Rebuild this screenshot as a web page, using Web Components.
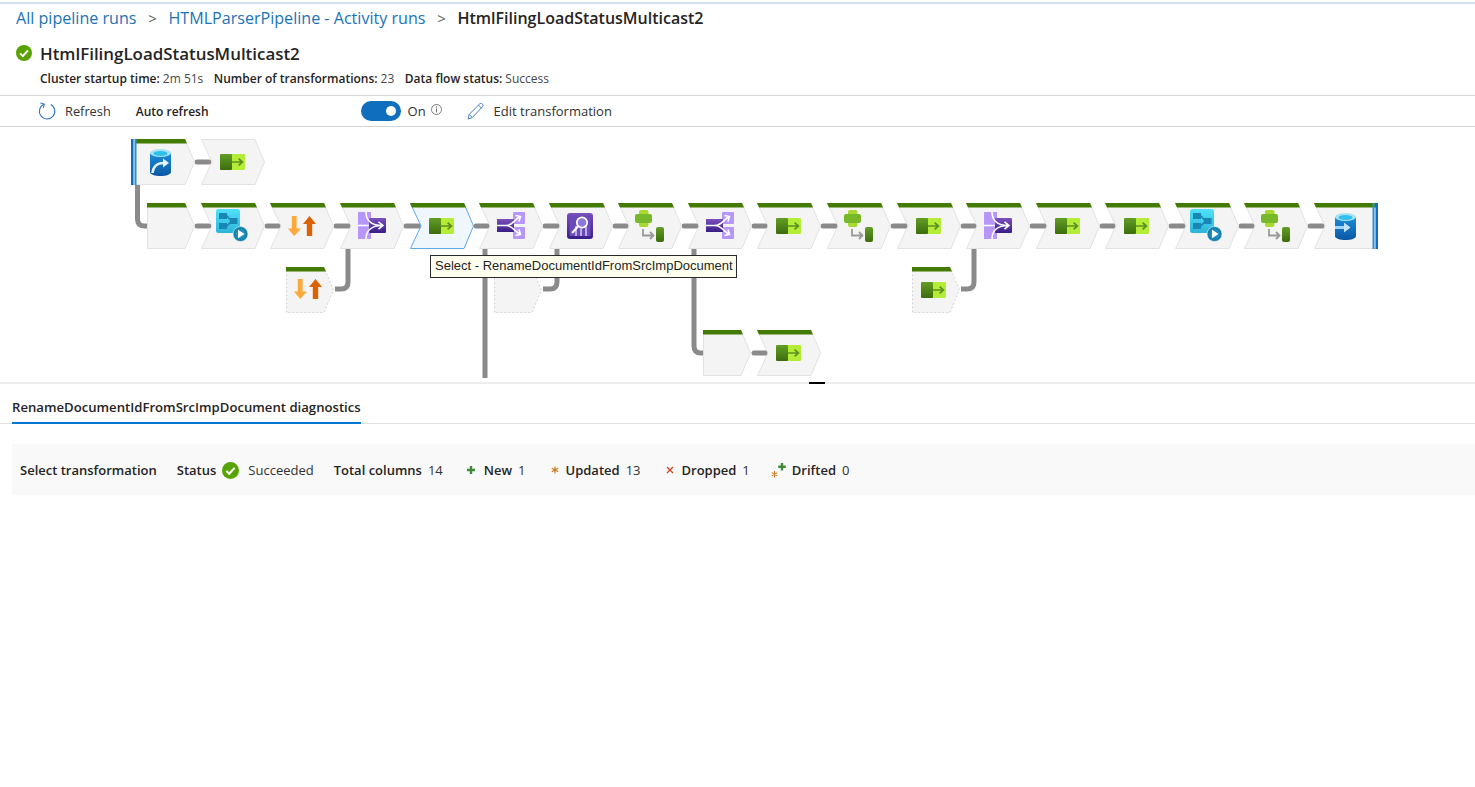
<!DOCTYPE html>
<html lang="en">
<head>
<meta charset="utf-8">
<title>HtmlFilingLoadStatusMulticast2</title>
<style>
  html, body { margin: 0; height: 100%; background: #fff; overflow: hidden; }
  body { font-family: "Open Sans", "Noto Sans", sans-serif; color: #252423; }
</style>
</head>
<body>
  <run-breadcrumb>
    <a slot="first">All pipeline runs</a>
    <a slot="second">HTMLParserPipeline - Activity runs</a>
    <span slot="current">HtmlFilingLoadStatusMulticast2</span>
  </run-breadcrumb>
  <run-header name="HtmlFilingLoadStatusMulticast2">
    <run-stat label="Cluster startup time:" value="2m 51s"></run-stat>
    <run-stat label="Number of transformations:" value="23"></run-stat>
    <run-stat label="Data flow status:" value="Success"></run-stat>
  </run-header>
  <run-toolbar></run-toolbar>
  <flow-canvas>
    <flow-node x="131" y="12" shape="start" icon="source"></flow-node>
    <flow-node x="201" y="12" icon="select" nobar></flow-node>

    <flow-node x="147" y="76" shape="flat"></flow-node>
    <flow-node x="201" y="76" icon="flow"></flow-node>
    <flow-node x="270" y="76" icon="sort"></flow-node>
    <flow-node x="340" y="76" icon="join"></flow-node>
    <flow-node x="410" y="76" icon="select" selected></flow-node>
    <flow-node x="479" y="76" icon="split"></flow-node>
    <flow-node x="549" y="76" icon="window"></flow-node>
    <flow-node x="618" y="76" icon="derive"></flow-node>
    <flow-node x="688" y="76" icon="split"></flow-node>
    <flow-node x="757" y="76" icon="select"></flow-node>
    <flow-node x="827" y="76" icon="derive"></flow-node>
    <flow-node x="897" y="76" icon="select"></flow-node>
    <flow-node x="966" y="76" icon="join"></flow-node>
    <flow-node x="1036" y="76" icon="select"></flow-node>
    <flow-node x="1105" y="76" icon="select"></flow-node>
    <flow-node x="1175" y="76" icon="flow"></flow-node>
    <flow-node x="1244" y="76" icon="derive"></flow-node>
    <flow-node x="1314" y="76" shape="end" icon="sink"></flow-node>

    <flow-node x="286" y="140" shape="flat" icon="sort" dashed></flow-node>
    <flow-node x="494" y="140" shape="flat" dashed></flow-node>
    <flow-node x="912" y="140" shape="flat" icon="select" dashed></flow-node>

    <flow-node x="703" y="203" shape="flat"></flow-node>
    <flow-node x="757" y="203" icon="select"></flow-node>

    <flow-tooltip x="430" y="128">Select - RenameDocumentIdFromSrcImpDocument</flow-tooltip>
  </flow-canvas>
  <diag-tabs>RenameDocumentIdFromSrcImpDocument diagnostics</diag-tabs>
  <diag-summary>
    <diag-item label="Select transformation"></diag-item>
    <diag-item label="Status" icon="check" value="Succeeded"></diag-item>
    <diag-item label="Total columns" value="14"></diag-item>
    <diag-item label="New" icon="plus" value="1"></diag-item>
    <diag-item label="Updated" icon="star" value="13"></diag-item>
    <diag-item label="Dropped" icon="cross" value="1"></diag-item>
    <diag-item label="Drifted" icon="drift" value="0"></diag-item>
  </diag-summary>

<script>
  const CHECK_ICON = (size) => `
    <svg width="${size}" height="${size}" viewBox="0 0 16 16" aria-hidden="true">
      <circle cx="8" cy="8" r="8" fill="#57a300"/>
      <path d="M4.1 8.4l2.7 2.7 5.1-5.6" fill="none" stroke="#fff" stroke-width="2"/>
    </svg>`;

  const GREEN_GRAD = `
    <linearGradient id="gr" x1="0" y1="0" x2="0" y2="1">
      <stop offset="0" stop-color="#639e26"/><stop offset="1" stop-color="#3c6c0c"/>
    </linearGradient>`;
  const PURPLE_GRAD = `
    <linearGradient id="pu" x1="0" y1="0" x2="0" y2="1">
      <stop offset="0" stop-color="#7c50bd"/><stop offset="1" stop-color="#3a1d86"/>
    </linearGradient>`;
  const BLUE_GRAD = `
    <linearGradient id="bl" x1="0" y1="0" x2="0" y2="1">
      <stop offset="0" stop-color="#1b8ed8"/><stop offset="1" stop-color="#0b57a4"/>
    </linearGradient>`;
  const CYAN_GRAD = `
    <linearGradient id="cy" x1="0" y1="0" x2="0" y2="1">
      <stop offset="0" stop-color="#50e2fb"/><stop offset="1" stop-color="#2db4d8"/>
    </linearGradient>`;

  // dx/dy place the icon inside a notched node; flat nodes shift it 10px left
  const FLOW_ICONS = {
    select: { dx: 19, dy: 15, svg: `
      <defs>${GREEN_GRAD}</defs>
      <rect x="11" width="14" height="16" rx="1" fill="#b4ec36"/>
      <rect width="12" height="16" rx="1" fill="url(#gr)"/>
      <path d="M12 8h10.5M18.6 4.6L22.4 8l-3.8 3.4" fill="none" stroke="#5c8f22" stroke-width="1.7"/>` },
    sort: { dx: 18, dy: 13, svg: `
      <path d="M3.800 0h4.800v12.500H13L6.200 20 0 12.500h3.800z" fill="#ffa83a"/>
      <path d="M21.500 0L28 8h-3.800v12h-5.400V8H15z" fill="#dc6200"/>` },
    join: { dx: 18, dy: 9, svg: `
      <defs>${PURPLE_GRAD}</defs>
      <rect width="13" height="27" fill="#b796f9"/>
      <rect x="11" y="6" width="17" height="15" rx="1" fill="url(#pu)"/>
      <path d="M0 13.5h11M8 0c0 7 4 13.5 16.500 13.500M8 27c0-7 4-13.500 16.500-13.500M20.500 9.800l4.500 3.700-4.500 3.700" fill="none" stroke="#fff" stroke-width="1.600"/>` },
    split: { dx: 18, dy: 9, svg: `
      <defs>${PURPLE_GRAD}</defs>
      <rect x="16" width="12" height="12" rx="1" fill="#b796f9"/>
      <rect x="16" y="15" width="12" height="12" rx="1" fill="#b796f9"/>
      <rect y="7" width="17" height="13" fill="url(#pu)"/>
      <path d="M0 13.500h9c6 0 8-5 14-9M9 13.500c6 0 8 5 14 9M18.500 3.500l5 1-1.500 5M18.500 23.500l5-1-1.500-5" fill="none" stroke="#fff" stroke-width="1.600"/>` },
    window: { dx: 18, dy: 10, svg: `
      <defs>${PURPLE_GRAD}</defs>
      <rect width="26" height="26" rx="3" fill="url(#pu)"/>
      <rect x="2.500" y="2.500" width="21" height="20.500" fill="#6a49b8"/>
      <path d="M9 13v10M14 15.500V23M19 13v10" stroke="#d8cff5" stroke-width="1.500"/>
      <circle cx="15" cy="9.500" r="5.200" fill="#8f78da" stroke="#fff" stroke-width="1.700"/>
      <path d="M11 13.500l-6 6.500" stroke="#fff" stroke-width="2"/>` },
    derive: { dx: 17, dy: 7, svg: `
      <defs>${GREEN_GRAD}</defs>
      <rect x="4" width="9.500" height="17" rx="2" fill="#a8d92f"/>
      <rect y="4" width="17" height="9" rx="2" fill="#76b82a"/>
      <path d="M8 19v6.500h10M15 22l3.500 3.500L15 29" fill="none" stroke="#9a9a9a" stroke-width="1.800"/>
      <rect x="21" y="17" width="8" height="15" rx="2" fill="url(#gr)"/>` },
    flow: { dx: 15, dy: 6, svg: `
      <defs>${CYAN_GRAD}</defs>
      <rect width="24" height="24" rx="2.500" fill="url(#cy)"/>
      <path d="M8 7h3l4.500 5L11 17H8" fill="none" stroke="#1a86b5" stroke-width="1.700"/>
      <rect x="3" y="4" width="8" height="6" fill="#1a86b5"/>
      <rect x="3" y="14" width="8" height="6" fill="#1a86b5"/>
      <rect x="14" y="9" width="7.500" height="6" fill="#1a86b5"/>
      <circle cx="24.500" cy="25" r="7.500" fill="#1681ae" stroke="#e9f8fc" stroke-width=".6"/>
      <circle cx="24.500" cy="25" r="5" fill="#1f8fbd"/>
      <path d="M22 20.800l6.500 4.200-6.500 4.200z" fill="#fff"/>` },
    source: { dx: 19, dy: 10, svg: `
      <defs>${BLUE_GRAD}</defs>
      <path d="M0 4v19c0 2.500 5 4 10.500 4S21 25.500 21 23V4z" fill="url(#bl)"/>
      <ellipse cx="10.500" cy="4" rx="10.500" ry="4" fill="#a8e2f4"/>
      <ellipse cx="10.500" cy="4.500" rx="7" ry="2.500" fill="#2fc1ee"/>
      <path d="M2.500 24c.5-6 4.500-10 11-10" fill="none" stroke="#e3f2fd" stroke-width="2.600"/>
      <path d="M13 9.500l6 4.500-6 4.500z" fill="#e3f2fd"/>` },
    sink: { dx: 21, dy: 10, svg: `
      <defs>${BLUE_GRAD}</defs>
      <path d="M0 4v19c0 2.500 5 4 10.500 4S21 25.500 21 23V4z" fill="url(#bl)"/>
      <ellipse cx="10.500" cy="4" rx="10.500" ry="4" fill="#a8e2f4"/>
      <ellipse cx="10.500" cy="4.500" rx="7" ry="2.500" fill="#2fc1ee"/>
      <path d="M0 14.500h10" stroke="#a3d4f7" stroke-width="3"/>
      <path d="M9 9.500l6.500 5-6.500 5z" fill="#c5e4fb"/>` }
  };

  class RunBreadcrumb extends HTMLElement {
    constructor() {
      super();
      this.attachShadow({ mode: 'open' }).innerHTML = `
        <style>
          :host { display: flex; align-items: center; height: 28px; margin-top: 2px; padding: 0 0 3px 16px;
                  border-top: 2px solid #d5e0f2; font-size: 16.100px; }
          ::slotted(a) { color: #1a73b8; }
          ::slotted(span) { font-weight: 600; font-size: 16px; color: #252423; }
          .sep { margin: 0 11.700px; color: #605e5c; font-size: 15px; }
        </style>
        <slot name="first"></slot><span class="sep">&gt;</span>
        <slot name="second"></slot><span class="sep">&gt;</span>
        <slot name="current"></slot>`;
    }
  }

  class RunStat extends HTMLElement {
    constructor() {
      super();
      this.attachShadow({ mode: 'open' }).innerHTML = `
        <style>
          :host { display: inline-flex; gap: 3px; align-items: baseline; }
          b { font-weight: 600; font-size: 12px; }
          span { font-size: 12px; color: #484644; }
        </style>
        <b></b><span></span>`;
    }
    connectedCallback() {
      this.shadowRoot.querySelector('b').textContent = this.getAttribute('label');
      this.shadowRoot.querySelector('span').textContent = this.getAttribute('value');
    }
  }

  class RunHeader extends HTMLElement {
    constructor() {
      super();
      this.attachShadow({ mode: 'open' }).innerHTML = `
        <style>
          :host { display: block; padding: 5px 0 0 16px; height: 55px; }
          .title { display: flex; align-items: center; gap: 8px; height: 26px; }
          h1 { margin: 0; font-size: 16.900px; font-weight: 600; color: #252423; }
          svg { display: block; }
          .stats { display: flex; gap: 10.500px; margin: 4px 0 0 24px; }
        </style>
        <div class="title">${CHECK_ICON(16)}<h1></h1></div>
        <div class="stats"><slot></slot></div>`;
    }
    connectedCallback() {
      this.shadowRoot.querySelector('h1').textContent = this.getAttribute('name');
    }
  }

  class RunToolbar extends HTMLElement {
    constructor() {
      super();
      this.attachShadow({ mode: 'open' }).innerHTML = `
        <style>
          :host { display: flex; align-items: center; height: 30px; padding-left: 38px; font-size: 13px;
                  border-top: 1px solid #d4d4d4; border-bottom: 1px solid #d4d4d4; color: #323130; }
          svg { display: block; flex: none; }
          .refresh { margin-left: 9px; font-size: 12.800px; }
          .auto { margin-left: 25px; font-size: 12px; font-weight: 600; color: #252423; }
          .toggle { position: relative; box-sizing: border-box; width: 40px; height: 20px; margin-left: 152px;
                    border-radius: 10px; background: #106ebe; }
          .toggle i { position: absolute; right: 5px; top: 5px; width: 10px; height: 10px; border-radius: 50%; background: #fff; }
          .on { margin-left: 7px; }
          .info { margin-left: 5px; margin-top: -3px; }
          .edit { margin-left: 25px; }
          .label { margin-left: 10px; }
        </style>
        <svg width="18" height="18" viewBox="0 0 18 18" aria-hidden="true">
          <path d="M6 2.200A7.700 7.700 0 1 0 12.800 2.500" fill="none" stroke="#2f79bf" stroke-width="1.100"/>
          <path d="M2.500 1l3.700 1.100-.9 3.700" fill="none" stroke="#2f79bf" stroke-width="1.100"/>
        </svg>
        <span class="refresh">Refresh</span>
        <span class="auto">Auto refresh</span>
        <span class="toggle"><i></i></span>
        <span class="on">On</span>
        <svg class="info" width="11" height="11" viewBox="0 0 11 11" aria-hidden="true">
          <circle cx="5.500" cy="5.500" r="5" fill="none" stroke="#605e5c" stroke-width=".8"/>
          <path d="M5.500 4.500v4M5.500 2.400v1.100" stroke="#605e5c" stroke-width=".9"/>
        </svg>
        <svg class="edit" width="17" height="17" viewBox="0 0 17 17" aria-hidden="true">
          <path d="M1 16l1.200-4.600L12.600 1c.8-.8 2-.8 2.800 0s.8 2 0 2.800L5.300 14.600z M2.200 11.400l3.100 3.200 M11.500 2.200l3.200 3.200" fill="none" stroke="#4a80bd" stroke-width="1"/>
        </svg>
        <span class="label">Edit transformation</span>`;
    }
  }

  class FlowNode extends HTMLElement {
    constructor() {
      super();
      this.attachShadow({ mode: 'open' });
    }
    connectedCallback() {
      const shape = this.getAttribute('shape') || 'notch';
      const flat = shape === 'flat' || shape === 'start';
      const w = shape === 'flat' ? 48 : 64;
      const tip = w - 0.5;
      const shoulder = w - 10;
      const outline = {
        notch: `M.5 .5H${shoulder}L${tip} 23 ${shoulder} 45.500H.5L11 23z`,
        flat: `M.5 .5H${shoulder}L${tip} 23 ${shoulder} 45.500H.5z`,
        start: `M.5 .5H${shoulder}L${tip} 23 ${shoulder} 45.500H.5z`,
        end: `M.5 .5H63.500V45.500H.5L11 23z`
      }[shape];
      const selected = this.hasAttribute('selected');
      const dashed = this.hasAttribute('dashed');
      const fill = selected ? '#eff6fc' : '#f4f4f4';
      const stroke = selected ? '#5ea9e6' : dashed ? '#d4d4d4' : '#e2e2e2';
      const barLeft = shape === 'start' ? 4 : 0;
      const barRight = shape === 'end' ? 64 : shoulder;
      const bar = this.hasAttribute('nobar') ? '' :
        `<path d="M${barLeft} 0H${barRight}${shape === 'end' ? 'V4.500' : 'L' + (barRight + 2) + ' 4.500'}H${barLeft + (flat ? 0 : 2)}z" fill="#437a00"/>`;
      let rails = '';
      if (shape === 'start') rails = '<rect width="2.500" height="46" fill="#106ebe"/><rect x="3.500" width="2" height="46" fill="#2b8fdb"/>';
      if (shape === 'end') rails = '<rect x="58.500" width="2" height="46" fill="#2b8fdb"/><rect x="61.500" width="2.500" height="46" fill="#106ebe"/>';
      const icon = FLOW_ICONS[this.getAttribute('icon')];
      let art = '';
      if (icon) {
        const dx = shape === 'flat' ? icon.dx - 10 : icon.dx;
        const dy = dashed && this.getAttribute('icon') === 'sort' ? icon.dy - 1 : icon.dy;
        art = `<g transform="translate(${dx} ${dy})">${icon.svg}</g>`;
      }
      this.shadowRoot.innerHTML = `
        <style>
          :host { position: absolute; left: ${this.getAttribute('x')}px; top: ${this.getAttribute('y')}px; width: ${w}px; height: 46px; }
          svg { display: block; overflow: visible; }
        </style>
        <svg width="${w}" height="46" viewBox="0 0 ${w} 46" aria-hidden="true">
          <path d="${outline}" fill="${fill}" stroke="${stroke}" ${dashed ? 'stroke-dasharray="2 2"' : ''}/>
          ${bar}${rails}${art}
        </svg>`;
    }
  }

  class FlowTooltip extends HTMLElement {
    constructor() {
      super();
      this.attachShadow({ mode: 'open' }).innerHTML = `
        <style>
          :host { position: absolute; box-sizing: border-box; height: 23px; padding: 0 3px 0 4px; white-space: nowrap;
                  border: 1px solid #2b2b2b; background: #fffff0; color: #252423; font: 13px/20px "Liberation Sans", Arial, sans-serif; }
        </style>
        <slot></slot>`;
    }
    connectedCallback() {
      this.style.left = this.getAttribute('x') + 'px';
      this.style.top = this.getAttribute('y') + 'px';
    }
  }

  class FlowCanvas extends HTMLElement {
    constructor() {
      super();
      const hops = [
        'M197 35H209',
        'M197 99H209', 'M267 99H279', 'M336 99H349', 'M406 99H419', 'M476 99H488', 'M545 99H558',
        'M615 99H627', 'M684 99H697', 'M754 99H766', 'M823 99H836', 'M893 99H906', 'M963 99H975',
        'M1032 99H1045', 'M1102 99H1114', 'M1171 99H1184', 'M1241 99H1253', 'M1310 99H1323',
        'M754 226H766'
      ];
      const branches = [
        'M137.500 58V92Q137.500 99 144.500 99H149',
        'M348 122V155Q348 162 341 162H335',
        'M485 122V251',
        'M557 122V155Q557 162 550 162H543',
        'M694 122V219Q694 226 701 226H705',
        'M974 122V155Q974 162 967 162H961'
      ];
      this.attachShadow({ mode: 'open' }).innerHTML = `
        <style>
          :host { display: block; position: relative; height: 255px; border-bottom: 2px solid #ededed; overflow: visible; }
          svg { position: absolute; inset: 0; }
          .mark { position: absolute; left: 809px; bottom: -2px; width: 16px; height: 2px; background: #000; }
        </style>
        <svg width="1475" height="255" aria-hidden="true">
          <g fill="none" stroke="#8a8a8a" stroke-width="5">
            <g stroke-linecap="round">${hops.map((d) => `<path d="${d}"/>`).join('')}</g>
            ${branches.map((d) => `<path d="${d}"/>`).join('')}
          </g>
        </svg>
        <slot></slot>
        <div class="mark"></div>`;
    }
  }

  class DiagTabs extends HTMLElement {
    constructor() {
      super();
      this.attachShadow({ mode: 'open' }).innerHTML = `
        <style>
          :host { display: block; height: 40px; box-sizing: border-box; padding-left: 12px; border-bottom: 1px solid #e1e1e1; }
          .tab { display: inline-block; box-sizing: border-box; height: 40px; line-height: 46px; font-size: 13.150px; font-weight: 600;
                 color: #252423; border-bottom: 2px solid #0078d4; white-space: nowrap; }
        </style>
        <span class="tab"><slot></slot></span>`;
    }
  }

  class DiagSummary extends HTMLElement {
    constructor() {
      super();
      this.attachShadow({ mode: 'open' }).innerHTML = `
        <style>
          :host { display: flex; align-items: center; gap: 20px; box-sizing: border-box; height: 51px; margin: 20px 0 0 12px; padding: 1px 0 0 8px; background: #f9f9f9; }
        </style>
        <slot></slot>`;
    }
  }

  const ITEM_ICONS = {
    check: CHECK_ICON(17),
    plus: `<svg width="8" height="8" viewBox="0 0 8 8" aria-hidden="true"><path d="M4 0v8M0 4h8" stroke="#3e8a3a" stroke-width="2.400"/></svg>`,
    star: `<svg width="8" height="8" viewBox="0 0 8 8" aria-hidden="true"><path d="M4 .5v7M.8 2.200l6.400 3.600M.8 5.800l6.400-3.600" stroke="#c97a1c" stroke-width="1.200"/></svg>`,
    cross: `<svg width="8" height="8" viewBox="0 0 8 8" aria-hidden="true"><path d="M1 1l6 6M7 1L1 7" stroke="#d13f1f" stroke-width="1.300"/></svg>`,
    drift: `<svg width="15" height="15" viewBox="0 0 15 15" aria-hidden="true"><path d="M3.500 8v6.500M.7 9.600l5.600 3.300M.7 12.900l5.600-3.300" stroke="#c97a1c" stroke-width="1.100"/><path d="M11 0v7.500M7.200 3.800h7.600" stroke="#3e8a3a" stroke-width="2.400"/></svg>`
  };

  // spacing around each column-kind icon: [before, after]
  const LEAD_MARGINS = { plus: [4, 3], star: [5, 1], cross: [5, 2], drift: [1, 0] };

  class DiagItem extends HTMLElement {
    constructor() {
      super();
      this.attachShadow({ mode: 'open' });
    }
    connectedCallback() {
      const name = this.getAttribute('icon');
      const icon = ITEM_ICONS[name];
      const value = this.getAttribute('value');
      const label = `<b>${this.getAttribute('label')}</b>`;
      const margins = LEAD_MARGINS[name] || [0, 0];
      // the status icon sits after its label, the column kinds before theirs
      const lead = icon && name !== 'check' ? icon : '';
      const mid = name === 'check' ? icon : '';
      this.shadowRoot.innerHTML = `
        <style>
          :host { display: inline-flex; align-items: center; gap: 6px; font-size: 13px; color: #323130; }
          b { font-weight: 600; color: #252423; }
          svg { display: block; flex: none; }
          .lead { margin: 0 ${margins[1]}px 0 ${margins[0]}px; }
          .mid { margin-right: 3px; }
        </style>
        ${lead ? `<span class="lead">${lead}</span>` : ''}
        ${label}
        ${mid ? `<span class="mid">${mid}</span>` : ''}
        ${value ? `<span>${value}</span>` : ''}`;
    }
  }

  customElements.define('run-breadcrumb', RunBreadcrumb);
  customElements.define('run-stat', RunStat);
  customElements.define('run-header', RunHeader);
  customElements.define('run-toolbar', RunToolbar);
  customElements.define('flow-node', FlowNode);
  customElements.define('flow-tooltip', FlowTooltip);
  customElements.define('flow-canvas', FlowCanvas);
  customElements.define('diag-tabs', DiagTabs);
  customElements.define('diag-summary', DiagSummary);
  customElements.define('diag-item', DiagItem);
</script>
</body>
</html>
